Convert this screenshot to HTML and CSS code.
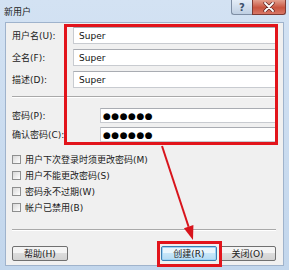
FILE: index.html
```html
<!DOCTYPE html>
<html lang="zh-CN">
<head>
    <meta charset="UTF-8">
    <title>新用户</title>
    <link rel="stylesheet" href="styles.css">
</head>
<body>
    <div class="window">
        <div class="titlebar">
            <span class="title">新用户</span>
            <div class="controls">
                <span class="btn-help">?</span>
                <span class="btn-close">
                    <svg width="12" height="10" viewBox="0 0 12 10">
                        <path d="M2 1 L10 9 M10 1 L2 9" stroke="#5a2020" stroke-width="3.2" stroke-linecap="round"/>
                        <path d="M2 1 L10 9 M10 1 L2 9" stroke="#ffffff" stroke-width="1.8" stroke-linecap="round"/>
                    </svg>
                </span>
            </div>
        </div>

        <div class="client">
            <div class="form names">
                <label>用户名(U):</label>
                <div class="field">Super</div>
                <label>全名(F):</label>
                <div class="field">Super</div>
                <label>描述(D):</label>
                <div class="field">Super</div>
            </div>

            <div class="sep"></div>

            <div class="form passwords">
                <label>密码(P):</label>
                <div class="field dots">●●●●●●</div>
                <label>确认密码(C):</label>
                <div class="field dots">●●●●●●</div>
            </div>

            <ul class="checks">
                <li><span class="box"></span><span class="focus">用户下次登录时须更改密码(M)</span></li>
                <li><span class="box"></span><span>用户不能更改密码(S)</span></li>
                <li><span class="box"></span><span>密码永不过期(W)</span></li>
                <li><span class="box"></span><span>帐户已禁用(B)</span></li>
            </ul>

            <div class="sep sep-bottom"></div>

            <div class="buttons">
                <button class="btn">帮助(H)</button>
                <div class="buttons-right">
                    <button class="btn btn-default">创建(R)</button>
                    <button class="btn btn-close-dlg">关闭(O)</button>
                </div>
            </div>
        </div>

        <!-- red annotations drawn over the dialog -->
        <div class="mark mark-fields"></div>
        <div class="mark mark-create"></div>
        <svg class="arrow" width="289" height="270" viewBox="0 0 289 270">
            <line x1="162" y1="146" x2="188.6" y2="226.7" stroke="#d8141c" stroke-width="2"/>
            <polygon points="193,240 193.4,225.1 183.9,228.3" fill="#d8141c"/>
        </svg>
    </div>
</body>
</html>
```

FILE: styles.css
```css
body {
    margin: 0;
    font-family: "DejaVu Sans", "Noto Sans CJK SC", sans-serif;
    font-size: 9px;
    color: #1a1a1a;
}

.window {
    position: relative;
    width: 289px;
    height: 270px;
    display: flex;
    flex-direction: column;
    background: linear-gradient(#d3e2f3, #c2d6ec);
    overflow: hidden;
}

.titlebar {
    height: 22px;
    display: flex;
    justify-content: space-between;
    align-items: flex-start;
}

.title {
    margin: 5px 0 0 4px;
    font-size: 9px;
    color: #222222;
}

.controls {
    display: flex;
    margin-right: 3px;
}

.btn-help, .btn-close {
    height: 15px;
    display: flex;
    align-items: center;
    justify-content: center;
    border: 1px solid #7e8ea4;
    border-top: none;
    box-sizing: border-box;
}

.btn-help {
    width: 21px;
    background: linear-gradient(#e4edf7, #bfcfe2);
    border-radius: 0 0 0 3px;
    border-right: none;
    color: #3b4f6b;
    font-size: 10px;
    font-weight: bold;
}

.btn-close {
    width: 34px;
    background: linear-gradient(#e3a08f, #c8543f 55%, #d87766);
    border-radius: 0 0 3px 0;
    border-color: #7d3a33;
}

.client {
    flex: 1;
    margin: 0 5px 4px 5px;
    padding: 4px 7px 0 6px;
    border: 1px solid #9fb3cc;
    background: #f0f0f0;
    display: flex;
    flex-direction: column;
}

.form {
    display: grid;
    align-items: center;
}

.names {
    grid-template-columns: 61px 1fr;
    grid-auto-rows: 17px;
    row-gap: 5px;
}

.passwords {
    margin-top: 10px;
    grid-template-columns: 88px 1fr;
    grid-auto-rows: 15px;
    row-gap: 4px;
}

.field {
    height: 100%;
    box-sizing: border-box;
    background: #ffffff;
    border: 1px solid #c8cbd0;
    border-top-color: #a9acb2;
    padding-left: 5px;
    display: flex;
    align-items: center;
    font-size: 9px;
    color: #111111;
}

.dots {
    padding-left: 2px;
    font-size: 9px;
    letter-spacing: 0.5px;
    color: #000000;
}

.sep {
    margin-top: 8px;
    border-top: 1px solid #a9a9a9;
    border-bottom: 1px solid #ffffff;
}

.sep-bottom {
    margin-top: 14px;
}

.checks {
    list-style: none;
    margin: 9px 0 0 0;
    padding: 0;
}

.checks li {
    height: 16px;
    display: flex;
    align-items: center;
}

.box {
    width: 9px;
    height: 9px;
    box-sizing: border-box;
    border: 1px solid #8e8f8f;
    background: linear-gradient(135deg, #d8d8d8, #ffffff);
    margin-right: 2px;
}

.checks li span:last-child {
    padding: 0 1px;
    border: 1px solid transparent;
}

.checks .focus {
    border: 1px dotted #555555;
}

.buttons {
    margin-top: 15px;
    display: flex;
    justify-content: space-between;
}

.buttons-right {
    display: flex;
    gap: 2px;
}

.btn {
    width: 56px;
    height: 15px;
    padding: 0;
    font-family: "DejaVu Sans", "Noto Sans CJK SC", sans-serif;
    font-size: 9px;
    color: #1a1a1a;
    border: 1px solid #707070;
    border-radius: 2px;
    background: linear-gradient(#f4f4f4 50%, #dcdcdc 50%, #d2d2d2);
}

.btn-default {
    border-color: #3c7fb1;
    background: linear-gradient(#eaf6fd 50%, #c6e6f9 50%, #b5dbf3);
    box-shadow: inset 0 0 0 1px #9fd3f5;
}

.btn-close-dlg {
    width: 57px;
}

.mark {
    position: absolute;
    box-sizing: border-box;
    border: 3px solid #e2141b;
}

.mark-fields {
    left: 64px;
    top: 24px;
    width: 214px;
    height: 121px;
}

.mark-create {
    left: 157px;
    top: 241px;
    width: 65px;
    height: 26px;
}

.arrow {
    position: absolute;
    left: 0;
    top: 0;
    pointer-events: none;
}
```
